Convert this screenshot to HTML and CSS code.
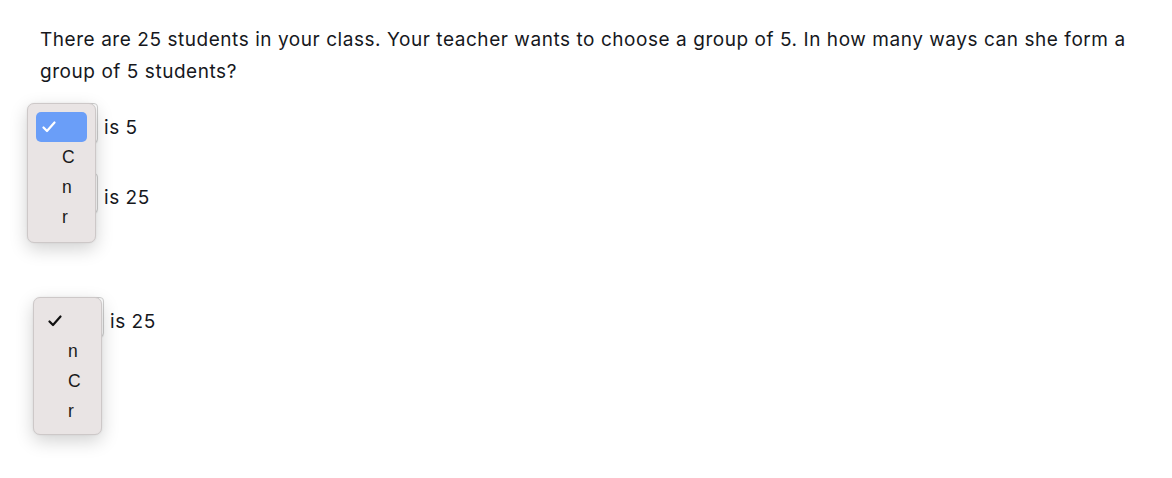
FILE: index.html
```html
<!DOCTYPE html>
<html>
<head>
<meta charset="utf-8">
<link rel="stylesheet" href="styles.css">
</head>
<body>
<div class="page">
  <p class="question">There are 25 students in your class. Your teacher wants to choose a group of 5. In how many ways can she form a group of 5 students?</p>

  <div class="group group-one">
    <div class="row"><span class="select"></span><span class="label">is 5</span></div>
    <div class="row"><span class="select"></span><span class="label">is 25</span></div>
    <div class="menu menu-one">
      <div class="item selected"><span class="check"><svg width="14" height="12" viewBox="0 0 14 12"><polyline points="1.5,6.5 5,10 12.5,1.5" fill="none" stroke="#fff" stroke-width="2.2" stroke-linecap="round" stroke-linejoin="round"/></svg></span><span class="opt"></span></div>
      <div class="item"><span class="check"></span><span class="opt">C</span></div>
      <div class="item"><span class="check"></span><span class="opt">n</span></div>
      <div class="item"><span class="check"></span><span class="opt">r</span></div>
    </div>
  </div>

  <div class="group group-two">
    <div class="row"><span class="select"></span><span class="label">is 25</span></div>
    <div class="menu menu-two">
      <div class="item"><span class="check"><svg width="14" height="12" viewBox="0 0 14 12"><polyline points="1.5,6.5 5,10 12.5,1.5" fill="none" stroke="#111" stroke-width="2.2" stroke-linecap="round" stroke-linejoin="round"/></svg></span><span class="opt"></span></div>
      <div class="item"><span class="check"></span><span class="opt">n</span></div>
      <div class="item"><span class="check"></span><span class="opt">C</span></div>
      <div class="item"><span class="check"></span><span class="opt">r</span></div>
    </div>
  </div>
</div>
</body>
</html>
```
FILE: styles.css
```css
html, body {
  margin: 0;
  padding: 0;
  background: #fff;
}
.page {
  box-sizing: border-box;
  min-height: 478px;
  padding: 24px 40px 0 40px;
  font-family: "Inter", "Open Sans", sans-serif;
  color: #16181d;
  font-size: 19px;
  letter-spacing: 0.55px;
}
.question {
  margin: 0;
  line-height: 32px;
  width: 1092px;
}
.group {
  position: relative;
}
.group-one {
  margin-top: 15px;
  display: flex;
  flex-direction: column;
  gap: 30px;
}
.group-two {
  margin-top: 84px;
  padding-left: 6px;
}
.row {
  display: flex;
  align-items: center;
  gap: 6px;
}
.select {
  display: block;
  width: 58px;
  height: 40px;
  box-sizing: border-box;
  border: 1px solid #cfcfcf;
  border-radius: 4px;
  background: #fff;
  box-shadow: 0 1px 1px rgba(0,0,0,0.08);
}
.label {
  padding-top: 10px;
  line-height: 22px;
}
.menu {
  position: absolute;
  width: 69px;
  box-sizing: border-box;
  background: #e9e4e4;
  border: 1px solid #cdc8c8;
  border-radius: 7px;
  box-shadow: 0 6px 18px rgba(0,0,0,0.18), 0 0 2px rgba(0,0,0,0.08);
  font-family: "Liberation Sans", Arial, sans-serif;
  font-size: 17.5px;
  letter-spacing: 0;
  color: #1a1a1a;
}
.menu-one {
  left: -13px;
  top: 0;
  padding: 8px 0 10px 0;
}
.menu-two {
  left: -7px;
  top: 0;
  padding: 8px 0 8px 0;
}
.item {
  height: 30px;
  margin: 0 8px;
  border-radius: 5px;
  display: flex;
  align-items: center;
}
.item.selected {
  background: #6a9ef8;
}
.check {
  width: 26px;
  display: flex;
  justify-content: flex-end;
}
.check svg {
  display: block;
  margin-right: 6px;
}
.opt {
  line-height: 30px;
}
```
